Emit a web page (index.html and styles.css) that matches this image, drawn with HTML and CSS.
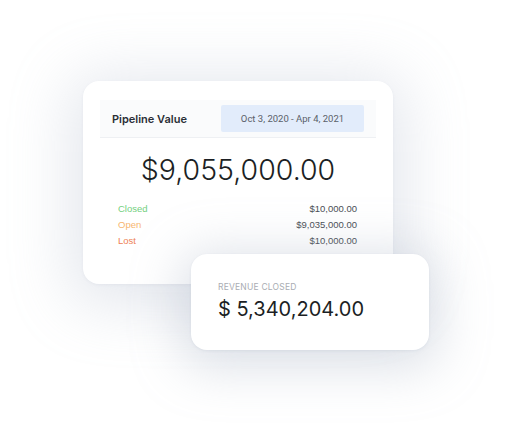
FILE: index.html
```html
<!DOCTYPE html>
<html>
<head>
<meta charset="utf-8">
<link rel="stylesheet" href="styles.css">
</head>
<body>
<div class="stage">
  <div class="card main">
    <div class="header">
      <span class="title">Pipeline Value</span>
      <span class="range">Oct 3, 2020 - Apr 4, 2021</span>
    </div>
    <div class="total">$9,055,000.00</div>
    <div class="rows">
      <div class="row"><span class="lbl closed">Closed</span><span class="val">$10,000.00</span></div>
      <div class="row"><span class="lbl open">Open</span><span class="val">$9,035,000.00</span></div>
      <div class="row"><span class="lbl lost">Lost</span><span class="val">$10,000.00</span></div>
    </div>
  </div>
  <div class="card revenue">
    <div class="rev-label">REVENUE CLOSED</div>
    <div class="rev-value">$ 5,340,204.00</div>
  </div>
</div>
</body>
</html>
```
FILE: styles.css
```css
html, body {
  margin: 0;
  padding: 0;
  background: #ffffff;
  font-family: Inter, "Liberation Sans", sans-serif;
}
.stage {
  position: relative;
  width: 512px;
  height: 434px;
  overflow: hidden;
  padding-top: 81px;
  box-sizing: border-box;
}
.card {
  background: #ffffff;
  border-radius: 16px;
}
.main {
  position: relative;
  margin-left: 83px;
  width: 310px;
  height: 203px;
  box-sizing: border-box;
  padding: 19px 17px 0 17px;
  box-shadow: 0 8px 60px 14px rgba(170, 180, 198, 0.3), 0 1px 3px rgba(165, 176, 194, 0.15);
}
.header {
  display: flex;
  align-items: center;
  justify-content: space-between;
  height: 37px;
  padding: 0 12px 0 12px;
  background: #fafbfc;
  border-bottom: 1px solid #eef0f3;
}
.title {
  font-size: 11px;
  font-weight: 600;
  color: #2b2f36;
}
.range {
  display: flex;
  align-items: center;
  justify-content: center;
  width: 143px;
  height: 27px;
  background: #e2ecfb;
  border-radius: 2px;
  font-size: 9.5px;
  color: #5a5f68;
  font-family: Roboto, Inter, sans-serif;
}
.total {
  text-align: center;
  font-size: 28.5px;
  font-weight: 300;
  color: #1c1f24;
  margin-top: 14px;
}
.rows {
  margin-top: 16px;
  padding: 0 19px 0 18px;
  display: flex;
  flex-direction: column;
  gap: 4px;
  font-family: "Liberation Sans", Arial, sans-serif;
}
.row {
  display: flex;
  justify-content: space-between;
  font-size: 9.5px;
  line-height: 12px;
}
.val { color: #4a4e55; }
.closed { color: #74cf80; }
.open { color: #f7b670; }
.lost { color: #ee8156; }
.revenue {
  position: absolute;
  left: 191px;
  top: 254px;
  width: 238px;
  height: 96px;
  box-sizing: border-box;
  padding: 28px 27px 0 27px;
  box-shadow: 0 8px 50px 10px rgba(160, 172, 190, 0.36), 0 1px 3px rgba(160, 172, 190, 0.2);
}
.rev-label {
  font-size: 8.5px;
  color: #a9acb2;
  letter-spacing: 0.2px;
}
.rev-value {
  margin-top: 5px;
  font-size: 20px;
  color: #1c1f24;
  font-weight: 400;
}
```
